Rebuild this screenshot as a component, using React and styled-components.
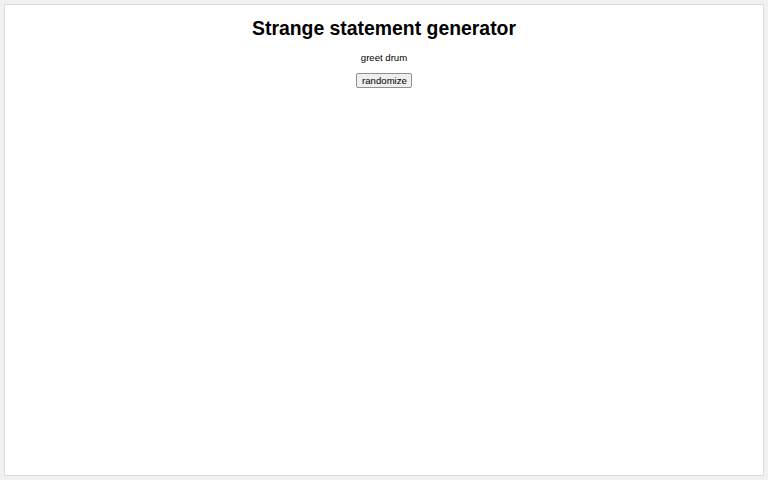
import React, { useState } from 'react';
import styled, { createGlobalStyle } from 'styled-components';

const words = ['greet drum', 'eat cloud', 'sing spoon', 'chase moon', 'fold river'];

const Global = createGlobalStyle`
  html, body {
    margin: 0;
    padding: 0;
    background: #f2f2f2;
    font-family: "Liberation Sans", Arial, sans-serif;
  }
`;

const Page = styled.div`
  padding: 4px;
  height: 480px;
  box-sizing: border-box;
`;

const Panel = styled.div`
  background: #fff;
  border: 1px solid #dcdcdc;
  height: 100%;
  box-sizing: border-box;
  display: flex;
  flex-direction: column;
  align-items: center;
  padding-top: 12px;
`;

const Titulo = styled.h1`
  margin: 0;
  font-size: 19.4px;
  font-weight: bold;
  color: #000;
  line-height: 23px;
`;

const Frase = styled.p`
  margin: 12px 0 0;
  font-size: 9.6px;
  color: #000;
  line-height: 12px;
`;

const Botao = styled.button`
  margin-top: 9px;
  font-family: "Liberation Sans", Arial, sans-serif;
  font-size: 9.6px;
  line-height: 12px;
  padding: 0 4px 0 5px;
  height: 15px;
  color: #000;
  background: #efefef;
  border: 1px solid #8f8f8f;
  border-radius: 2px;
`;

function App() {
  const [i, setI] = useState(0);
  return (
    <Page>
      <Global />
      <Panel>
        <Titulo>Strange statement generator</Titulo>
        <Frase>{words[i]}</Frase>
        <Botao onClick={() => setI((i + 1) % words.length)}>randomize</Botao>
      </Panel>
    </Page>
  );
}

export default App;
